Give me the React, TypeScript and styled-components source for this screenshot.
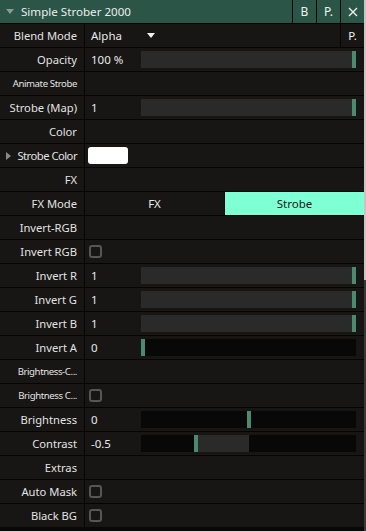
import React from 'react';
import styled, { createGlobalStyle } from 'styled-components';

const GlobalStyle = createGlobalStyle`
  html, body {
    margin: 0;
    padding: 0;
    background: #080808;
  }
  body {
    font-family: "Noto Sans", "Open Sans", sans-serif;
    color: #e4e4e4;
  }
`;

const Frame = styled.div`
  display: flex;
  width: 366px;
  height: 531px;
  overflow: hidden;
  background: #080808;
`;

const Panel = styled.div`
  width: 364px;
  display: flex;
  flex-direction: column;
`;

const Scrollbar = styled.div`
  width: 2px;
  display: flex;
  flex-direction: column;
  background: #3a3a3a;
`;

const Thumb = styled.div`
  height: 280px;
  background: #c6c6c6;
`;

const Header = styled.div`
  height: 23px;
  display: flex;
  align-items: stretch;
  background: #2b5647;
`;

const HeaderTitle = styled.div`
  flex: 1;
  display: flex;
  align-items: center;
  gap: 7px;
  padding-left: 6px;
  font-size: 11.6px;
  color: #ececec;
`;

const DownArrow = styled.span<{ $color?: string }>`
  width: 0;
  height: 0;
  border-left: 4px solid transparent;
  border-right: 4px solid transparent;
  border-top: 5px solid ${(p) => p.$color ?? '#8a9a94'};
`;

const RightArrow = styled.span`
  width: 0;
  height: 0;
  border-top: 4px solid transparent;
  border-bottom: 4px solid transparent;
  border-left: 5px solid #8a8a8a;
`;

const HeadButton = styled.div`
  width: 23px;
  border-left: 1px solid #080808;
  display: flex;
  align-items: center;
  justify-content: center;
  font-size: 12px;
  color: #f0f0f0;
`;

const Row = styled.div`
  height: 23px;
  border-top: 1px solid #050505;
  display: flex;
  background: #171615;
`;

const Label = styled.div<{ $small?: boolean; $tight?: boolean }>`
  width: 85px;
  flex: none;
  border-right: 1px solid #050505;
  display: flex;
  align-items: center;
  justify-content: flex-end;
  padding-right: 7px;
  box-sizing: border-box;
  font-size: ${(p) => (p.$small ? '9.6px' : '11.2px')};
  letter-spacing: ${(p) => (p.$small ? '-0.4px' : p.$tight ? '-0.5px' : '0')};
  color: #e2e2e2;
  white-space: nowrap;
`;

const LabelArrow = styled.span`
  margin-right: auto;
  padding-left: 6px;
  display: flex;
`;

const Value = styled.div`
  flex: 1;
  display: flex;
  align-items: center;
  min-width: 0;
`;

const ValueText = styled.div<{ $w?: number }>`
  width: ${(p) => (p.$w ? `${p.$w}px` : 'auto')};
  flex: none;
  padding-left: 6px;
  box-sizing: border-box;
  font-size: 11.5px;
  color: #e8e8e8;
`;

const SliderTrack = styled.div`
  position: relative;
  width: 215px;
  height: 17px;
  margin-right: 7px;
  background: #080808;
`;

const SliderFill = styled.div`
  position: absolute;
  top: 0;
  bottom: 0;
  background: #2a2a2a;
`;

const SliderHandle = styled.div`
  position: absolute;
  top: 0;
  bottom: 0;
  width: 4px;
  background: #4a8a70;
`;

const DropArrow = styled.div`
  display: flex;
  align-items: center;
  padding-left: 6px;
`;

const Spacer = styled.div`
  flex: 1;
`;

const SideButton = styled.div`
  width: 23px;
  align-self: stretch;
  border-left: 1px solid #050505;
  display: flex;
  align-items: center;
  justify-content: center;
  font-size: 11.5px;
  color: #f0f0f0;
`;

const Checkbox = styled.div`
  width: 13px;
  height: 13px;
  margin-left: 4px;
  border: 2px solid #565656;
  border-radius: 3px;
  box-sizing: border-box;
`;

const Swatch = styled.div`
  width: 40px;
  height: 17px;
  margin-left: 3px;
  border-radius: 3px;
  background: #ffffff;
`;

const Segments = styled.div`
  flex: 1;
  display: flex;
  gap: 1px;
  background: #050505;
`;

const Segment = styled.div<{ $active?: boolean }>`
  flex: 1;
  display: flex;
  align-items: center;
  justify-content: center;
  font-size: 11.5px;
  background: ${(p) => (p.$active ? '#7fffd4' : '#171615')};
  color: ${(p) => (p.$active ? '#1a1a1a' : '#e8e8e8')};
`;

type SliderProps = { value: number; min: number; max: number; origin?: number };

const Slider: React.FC<SliderProps> = ({ value, min, max, origin }) => {
  const width = 215;
  const span = max - min;
  const pos = ((value - min) / span) * (width - 4);
  const start = origin === undefined ? 0 : ((origin - min) / span) * width;
  const left = Math.min(start, pos);
  const fillW = Math.abs(pos - start) + (origin === undefined ? 4 : 0);
  return (
    <SliderTrack>
      <SliderFill style={{ left, width: fillW }} />
      <SliderHandle style={{ left: pos }} />
    </SliderTrack>
  );
};

type Item =
  | { kind: 'empty'; label: string; small?: boolean }
  | { kind: 'slider'; label: string; value: string; num: number; min: number; max: number; origin?: number; small?: boolean }
  | { kind: 'check'; label: string; small?: boolean };

const rows: Item[] = [
  { kind: 'slider', label: 'Opacity', value: '100 %', num: 1, min: 0, max: 1 },
  { kind: 'empty', label: 'Animate Strobe', small: true },
  { kind: 'slider', label: 'Strobe (Map)', value: '1', num: 1, min: 0, max: 1 },
  { kind: 'empty', label: 'Color' },
];

const rows2: Item[] = [
  { kind: 'empty', label: 'Invert-RGB' },
  { kind: 'check', label: 'Invert RGB' },
  { kind: 'slider', label: 'Invert R', value: '1', num: 1, min: 0, max: 1 },
  { kind: 'slider', label: 'Invert G', value: '1', num: 1, min: 0, max: 1 },
  { kind: 'slider', label: 'Invert B', value: '1', num: 1, min: 0, max: 1 },
  { kind: 'slider', label: 'Invert A', value: '0', num: 0, min: 0, max: 1 },
  { kind: 'empty', label: 'Brightness-C...', small: true },
  { kind: 'check', label: 'Brightness C...', small: true },
  { kind: 'slider', label: 'Brightness', value: '0', num: 0, min: -1, max: 1, origin: 0 },
  { kind: 'slider', label: 'Contrast', value: '-0.5', num: -0.5, min: -1, max: 1, origin: 0 },
  { kind: 'empty', label: 'Extras' },
  { kind: 'check', label: 'Auto Mask' },
  { kind: 'check', label: 'Black BG' },
];

const renderRow = (item: Item) => (
  <Row key={item.label}>
    <Label $small={item.small}>{item.label}</Label>
    <Value>
      {item.kind === 'slider' && (
        <>
          <ValueText $w={56}>{item.value}</ValueText>
          <Slider value={item.num} min={item.min} max={item.max} origin={item.origin} />
        </>
      )}
      {item.kind === 'check' && <Checkbox />}
    </Value>
  </Row>
);

export default function App() {
  return (
    <Frame>
      <GlobalStyle />
      <Panel>
        <Header>
          <HeaderTitle>
            <DownArrow />
            Simple Strober 2000
          </HeaderTitle>
          <HeadButton>B</HeadButton>
          <HeadButton>P.</HeadButton>
          <HeadButton>
            <svg width="10" height="10" viewBox="0 0 10 10">
              <path d="M1 1 L9 9 M9 1 L1 9" stroke="#f0f0f0" strokeWidth="1.3" />
            </svg>
          </HeadButton>
        </Header>

        <Row>
          <Label>Blend Mode</Label>
          <Value>
            <ValueText $w={56}>Alpha</ValueText>
            <DropArrow>
              <DownArrow $color="#f0f0f0" />
            </DropArrow>
            <Spacer />
            <SideButton>P.</SideButton>
          </Value>
        </Row>

        {rows.map(renderRow)}

        <Row>
          <Label $tight>
            <LabelArrow>
              <RightArrow />
            </LabelArrow>
            Strobe Color
          </Label>
          <Value>
            <Swatch />
          </Value>
        </Row>

        <Row>
          <Label>FX</Label>
          <Value />
        </Row>

        <Row>
          <Label>FX Mode</Label>
          <Segments>
            <Segment>FX</Segment>
            <Segment $active>Strobe</Segment>
          </Segments>
        </Row>

        {rows2.map(renderRow)}
      </Panel>
      <Scrollbar>
        <Thumb />
      </Scrollbar>
    </Frame>
  );
}
